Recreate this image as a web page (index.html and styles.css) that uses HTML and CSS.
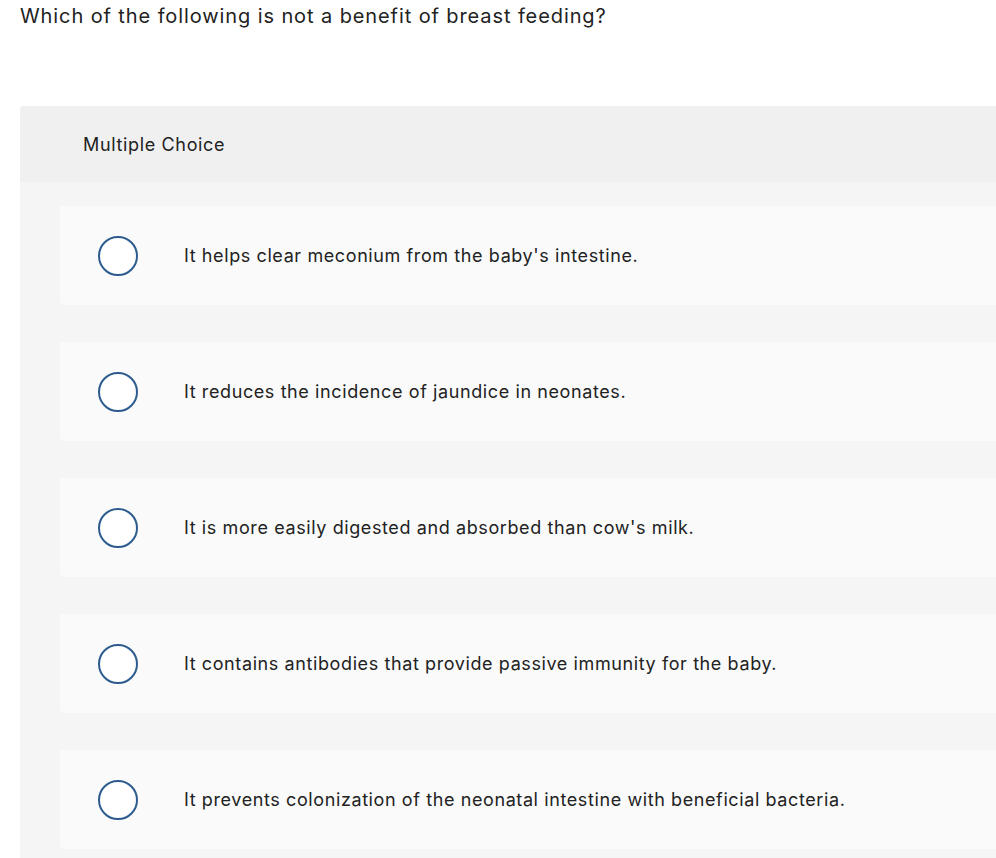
FILE: index.html
```html
<!DOCTYPE html>
<html>
<head>
<meta charset="utf-8">
<link rel="stylesheet" href="styles.css">
</head>
<body>
<div class="page">
  <p class="question">Which of the following is not a benefit of breast feeding?</p>
  <div class="panel">
    <div class="panel-head">Multiple Choice</div>
    <div class="panel-body">
      <div class="option"><span class="radio"></span><span class="label">It helps clear meconium from the baby's intestine.</span></div>
      <div class="option"><span class="radio"></span><span class="label">It reduces the incidence of jaundice in neonates.</span></div>
      <div class="option"><span class="radio"></span><span class="label">It is more easily digested and absorbed than cow's milk.</span></div>
      <div class="option"><span class="radio"></span><span class="label">It contains antibodies that provide passive immunity for the baby.</span></div>
      <div class="option"><span class="radio"></span><span class="label">It prevents colonization of the neonatal intestine with beneficial bacteria.</span></div>
    </div>
  </div>
</div>
</body>
</html>
```
FILE: styles.css
```css
html, body {
  margin: 0;
  padding: 0;
  overflow: hidden;
  background: #ffffff;
}
.page {
  width: 1060px;
  padding-left: 20px;
  font-family: "Inter", "Liberation Sans", sans-serif;
  font-variant-ligatures: none;
  color: #222222;
}
.question {
  margin: 0;
  padding-top: 3px;
  height: 103px;
  font-size: 20px;
  line-height: 26px;
  letter-spacing: 0.9px;
}
.panel {
  border-top-left-radius: 3px;
  overflow: hidden;
}
.panel-head {
  background: #f0f0f0;
  height: 76px;
  padding-left: 63px;
  display: flex;
  align-items: center;
  font-size: 18px;
  letter-spacing: 0.65px;
}
.panel-body {
  background: #f5f5f5;
  padding: 24px 0 9px 40px;
  display: flex;
  flex-direction: column;
  gap: 37px;
}
.option {
  background: #fafafa;
  border-radius: 3px;
  height: 99px;
  display: flex;
  align-items: center;
  padding-left: 38px;
}
.radio {
  width: 36px;
  height: 36px;
  border: 2px solid #2b5b8f;
  border-radius: 50%;
  background: #ffffff;
  flex: none;
}
.label {
  margin-left: 46px;
  font-size: 18px;
  letter-spacing: 0.6px;
}
```
